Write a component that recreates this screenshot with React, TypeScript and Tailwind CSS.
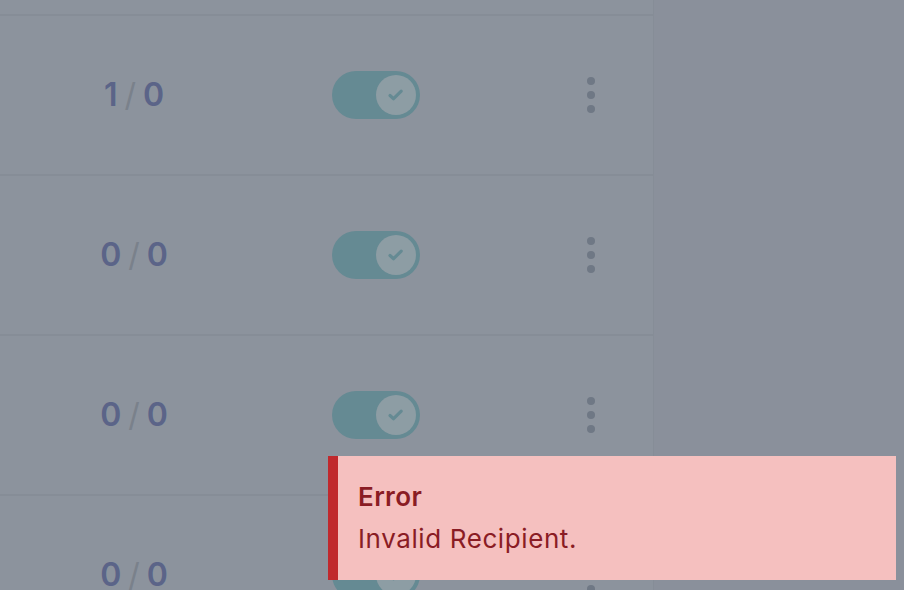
import React from "react";

const rows = [
  { sent: 1, failed: 0 },
  { sent: 0, failed: 0 },
  { sent: 0, failed: 0 },
  { sent: 0, failed: 0 },
];

function Toggle() {
  return (
    <div className="flex h-[48px] w-[88px] items-center justify-end rounded-full bg-[#658a93] px-[4px]">
      <div className="flex h-[40px] w-[40px] items-center justify-center rounded-full bg-[#8d9da4]">
        <svg width="20" height="20" viewBox="0 0 20 20" fill="none">
          <path
            d="M4 10.5l3.6 3.2 7.6-7.6"
            stroke="#658a93"
            strokeWidth="3.2"
            strokeLinecap="round"
            strokeLinejoin="round"
          />
        </svg>
      </div>
    </div>
  );
}

function Dots() {
  return (
    <div className="flex flex-col items-center gap-[6px]">
      <span className="h-[8px] w-[8px] rounded-full bg-[#6f7885]" />
      <span className="h-[8px] w-[8px] rounded-full bg-[#6f7885]" />
      <span className="h-[8px] w-[8px] rounded-full bg-[#6f7885]" />
    </div>
  );
}

export default function App() {
  return (
    <div
      className="relative flex h-[590px] w-[904px] overflow-hidden bg-[#8a909b]"
      style={{ fontFamily: "Inter, 'Noto Sans', sans-serif" }}
    >
      <div className="w-[654px] shrink-0 border-r border-[#868d97] bg-[#8c939d]">
        <div className="h-[16px] border-b-2 border-[#868d97]" />
        {rows.map((row, idx) => (
          <div
            key={idx}
            className="flex h-[160px] items-center border-b-2 border-[#868d97]"
          >
            <div className="flex w-[268px] justify-center text-[32px] font-semibold leading-none text-[#5b6488]">
              <span>{row.sent}</span>
              <span className="mx-[7px] font-normal text-[#7a818b]">/</span>
              <span>{row.failed}</span>
            </div>
            <div className="ml-[64px]">
              <Toggle />
            </div>
            <div className="ml-[167px]">
              <Dots />
            </div>
          </div>
        ))}
      </div>

      <div className="absolute left-[328px] top-[456px] flex h-[124px] w-[568px] bg-[#f5c0bf]">
        <div className="w-[10px] bg-[#c0292d]" />
        <div className="flex flex-col justify-center pl-[20px] text-[#8a1c24]">
          <div className="text-[26px] font-semibold leading-[32px] tracking-[0.4px]">Error</div>
          <div className="mt-[10px] text-[26px] leading-[32px] tracking-[0.6px]">Invalid Recipient.</div>
        </div>
      </div>
    </div>
  );
}
